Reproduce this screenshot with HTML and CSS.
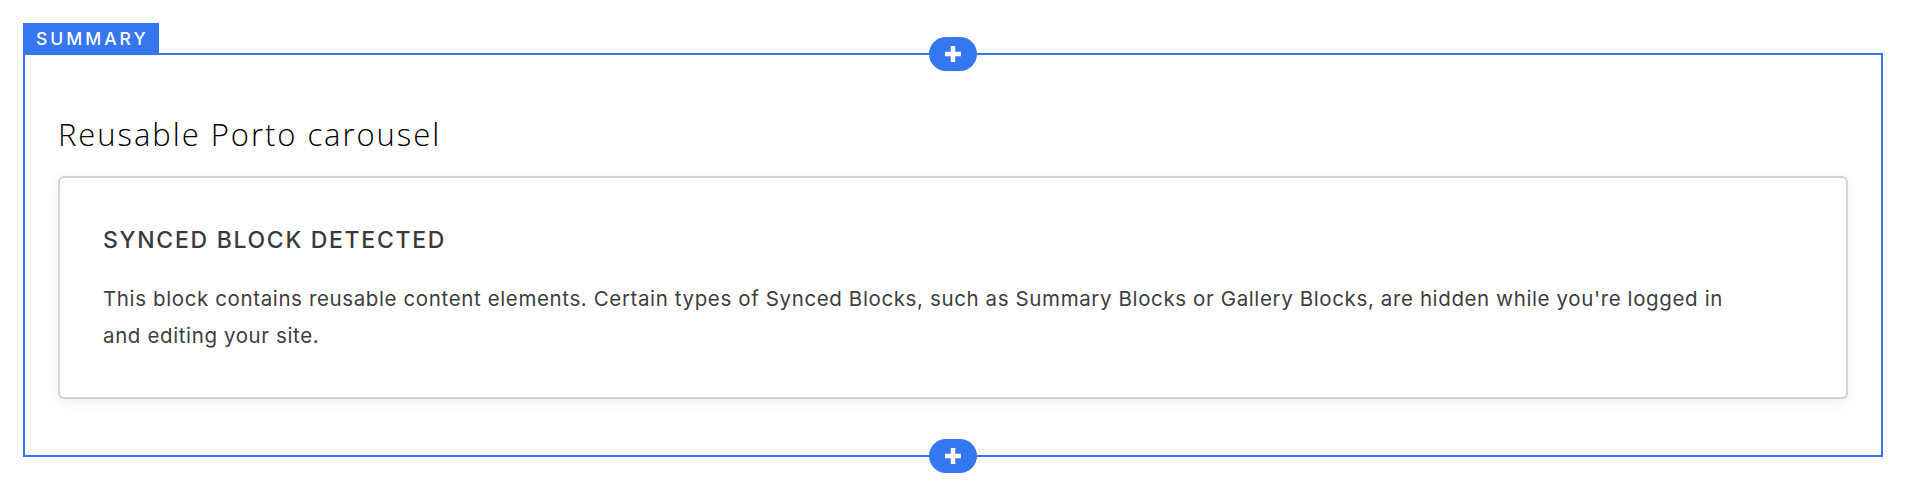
FILE: index.html
```html
<!DOCTYPE html>
<html lang="en">
<head>
<meta charset="utf-8">
<title>Summary block</title>
<link rel="stylesheet" href="styles.css">
</head>
<body>
<div class="page">
  <div class="block">
    <div class="label">SUMMARY</div>
    <div class="frame">
      <button class="add add-top" aria-label="Add section above">
        <svg width="18" height="18" viewBox="0 0 18 18"><path d="M9 1v16M1 9h16" stroke="#fff" stroke-width="4.5" fill="none"/></svg>
      </button>
      <h2 class="title">Reusable Porto carousel</h2>
      <div class="card">
        <h3 class="card-heading">SYNCED BLOCK DETECTED</h3>
        <p class="card-text">This block contains reusable content elements. Certain types of Synced Blocks, such as Summary Blocks or Gallery Blocks, are hidden while you're logged in<br>and editing your site.</p>
      </div>
      <button class="add add-bottom" aria-label="Add section below">
        <svg width="18" height="18" viewBox="0 0 18 18"><path d="M9 1v16M1 9h16" stroke="#fff" stroke-width="4.5" fill="none"/></svg>
      </button>
    </div>
  </div>
</div>
</body>
</html>
```
FILE: styles.css
```css
* { box-sizing: border-box; }
html, body { margin: 0; padding: 0; background: #ffffff; }
html { min-height: 100%; }
body { min-height: 488px; font-family: Inter, "Liberation Sans", sans-serif; }

.page {
  padding: 23px 23px 40px 23px;
}

.block {
  display: flex;
  flex-direction: column;
  align-items: flex-start;
}

.label {
  height: 30px;
  line-height: 31px;
  padding: 0 10px 0 13px;
  background: #3577f1;
  color: #ffffff;
  font-family: Inter, "Liberation Sans", sans-serif;
  font-size: 17.5px;
  font-weight: 500;
  letter-spacing: 3px;
}

.frame {
  position: relative;
  align-self: stretch;
  border: 2px solid #3577f1;
  padding: 0 33px 56px 33px;
  display: flex;
  flex-direction: column;
}

.add {
  position: absolute;
  left: 50%;
  width: 48px;
  height: 34px;
  border: 0;
  border-radius: 17px;
  background: #3577f1;
  padding: 0;
  display: flex;
  align-items: center;
  justify-content: center;
  z-index: 2;
}
.add-top { top: -1px; transform: translate(-50%, -50%); }
.add-bottom { bottom: -1px; transform: translate(-50%, 50%); }

.title {
  margin: 61px 0 23px 0;
  font-family: "Open Sans", Lato, sans-serif;
  font-weight: 300;
  font-size: 31px;
  line-height: 1.2;
  letter-spacing: 1.95px;
  color: #000000;
}

.card {
  border: 2px solid #d3d3d3;
  border-radius: 6px;
  background: #ffffff;
  box-shadow: 0 3px 14px rgba(0, 0, 0, 0.07);
  padding: 49px 43px 43px 43px;
}

.card-heading {
  margin: 0;
  font-size: 23px;
  font-weight: 500;
  line-height: 1.2;
  letter-spacing: 1.7px;
  color: #3a3a3a;
}

.card-text {
  margin: 25px 0 0 0;
  font-size: 20.5px;
  line-height: 37px;
  font-weight: 400;
  letter-spacing: 0.62px;
  color: #3e3e3e;
}
```
